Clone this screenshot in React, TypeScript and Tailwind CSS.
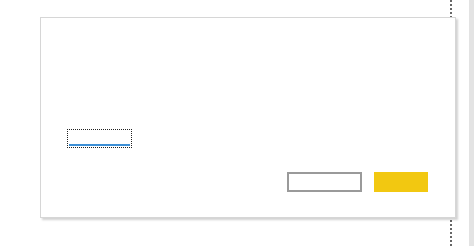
export default function App() {
  return (
    <div className="relative h-[246px] w-[474px] overflow-hidden bg-white font-['Liberation_Sans',sans-serif]">
      <div className="absolute left-[450px] top-0 h-full border-l-2 border-dotted border-[#666]" />
      <div className="absolute right-0 top-0 h-full w-[5px] bg-[#e3e3e3]" />

      <div className="absolute left-[40px] top-[17px] flex h-[201px] w-[416px] flex-col border border-[#d6d6d6] bg-white pb-[25px] pl-[27px] pr-[27px] pt-[112px] shadow-[2px_2px_2px_rgba(0,0,0,0.18)]">
        <div className="w-[63px] px-[1px] pb-[1px] outline-1 outline-dotted outline-[#222]">
          <input
            aria-label="value"
            className="block h-[16px] w-full border-b-2 border-[#3c8fd6] bg-white outline-none"
          />
        </div>

        <div className="mt-auto flex justify-end gap-[12px]">
          <button className="h-[20px] w-[75px] border-2 border-[#9a9a9a] bg-white" />
          <button className="h-[20px] w-[54px] bg-[#f2c811]" />
        </div>
      </div>
    </div>
  );
}
